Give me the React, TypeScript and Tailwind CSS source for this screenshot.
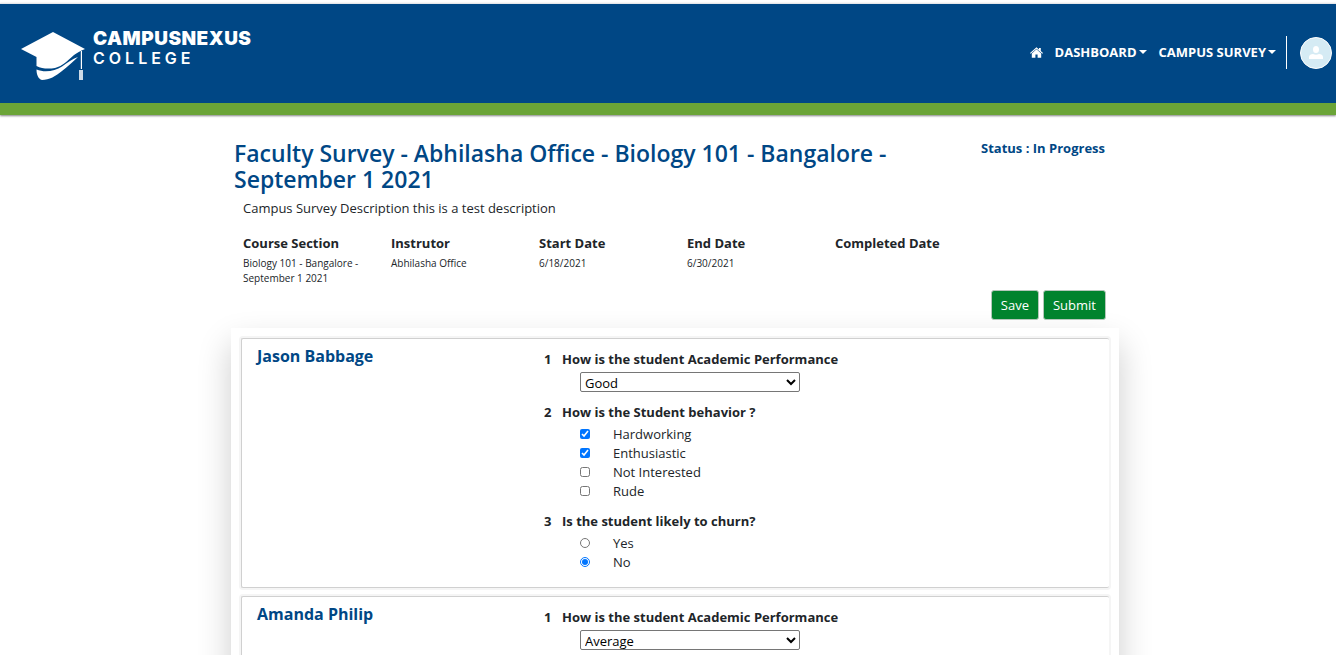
// App.tsx
import React, { useState } from 'react';

interface Question {
  text: string;
  type: 'select' | 'checkbox' | 'radio';
  options: string[];
}

interface Student {
  id: number;
  name: string;
  performance: string;
  behavior: string[];
  churn: string;
  questions: Question[];
}

const questions: Question[] = [
  { text: 'How is the student Academic Performance', type: 'select', options: ['Excellent', 'Good', 'Average', 'Poor'] },
  { text: 'How is the Student behavior ?', type: 'checkbox', options: ['Hardworking', 'Enthusiastic', 'Not Interested', 'Rude'] },
  { text: 'Is the student likely to churn?', type: 'radio', options: ['Yes', 'No'] },
];

const students: Student[] = [
  { id: 1, name: 'Jason Babbage', performance: 'Good', behavior: ['Hardworking', 'Enthusiastic'], churn: 'No', questions },
  { id: 2, name: 'Amanda Philip', performance: 'Average', behavior: [], churn: '', questions: questions.slice(0, 1) },
];

const details = [
  { label: 'Course Section', value: 'Biology 101 - Bangalore - September 1 2021' },
  { label: 'Instrutor', value: 'Abhilasha Office' },
  { label: 'Start Date', value: '6/18/2021' },
  { label: 'End Date', value: '6/30/2021' },
  { label: 'Completed Date', value: '' },
];

function Logo() {
  return (
    <a href="#" className="flex gap-1.5 text-white">
      <svg width="66" height="50" viewBox="0 0 66 50" fill="currentColor" aria-hidden="true">
        <path d="M32 1 L64 18 C59 20 56 22 53 24 C46 30 42 35 34 37 C28 38 21 38 15.5 35 V26 L0 18 Z" />
        <path d="M15.5 38.5 C24 42 34 40 41 35.5 C47 31.5 51 28 57 26 C52 31 47 35 41 40 C35 45 28 49 21 49 C17 48 15.5 43 15.5 38.5 Z" />
        <path d="M59.8 20 H61 V38 H59.8 Z" />
        <path d="M58 39 H62 V49 H58 Z" opacity="0.8" />
      </svg>
      <div className="flex flex-col font-['Inter',sans-serif]">
        <span className="text-[19px] leading-4 font-black tracking-wide">CAMPUSNEXUS</span>
        <span className="text-[16px] leading-[22px] font-semibold tracking-[4px]">COLLEGE</span>
      </div>
    </a>
  );
}

function Caret() {
  return (
    <svg width="8" height="4" viewBox="0 0 8 4" fill="currentColor" aria-hidden="true" className="mb-0.5">
      <path d="M0 0 H8 L4 4 Z" />
    </svg>
  );
}

function Header() {
  return (
    <header className="mt-[3px] border-t border-gray-200 shadow-[0_1px_2px_rgba(0,0,0,0.5)]">
      <div className="h-[99px] bg-[#004785] flex items-start justify-between pl-[21px] pr-1 pt-[27px]">
        <Logo />
        <nav className="flex items-center text-white text-[13px] font-bold pt-[5px]">
          <a href="#" aria-label="Home" className="mr-3">
            <svg width="13" height="11" viewBox="0 0 13 11" fill="currentColor" aria-hidden="true">
              <path d="M6.5 0.2 L9 2.4 V1 H10.8 V4 L13 6 L12.3 6.8 L6.5 1.7 L0.7 6.8 L0 6 Z" />
              <path d="M6.5 2.3 L11.2 6.4 V10.7 H7.6 V7.5 H5.4 V10.7 H1.8 V6.4 Z" />
            </svg>
          </a>
          <button type="button" className="flex items-center gap-0.5 mr-3">
            DASHBOARD <Caret />
          </button>
          <button type="button" className="flex items-center gap-0.5">
            CAMPUS SURVEY <Caret />
          </button>
          <span className="w-px h-[33px] bg-white ml-[10px] mr-[13px]" />
          <button type="button" aria-label="Profile" className="w-8 h-8 rounded-full bg-[#d5ebf4] border border-white flex items-center justify-center">
            <svg width="14" height="13" viewBox="0 0 14 13" fill="white" aria-hidden="true">
              <ellipse cx="7" cy="3.5" rx="3" ry="3.5" />
              <path d="M0 13 V11 C0 9 2 8 4 8 C6 9 8 9 10 8 C12 8 14 9 14 11 V13 Z" />
            </svg>
          </button>
        </nav>
      </div>
      <div className="h-3 bg-[#6ba437]" />
    </header>
  );
}

function StudentCard({ student }: { student: Student }) {
  const [performance, setPerformance] = useState(student.performance);
  const [behavior, setBehavior] = useState(student.behavior);
  const [churn, setChurn] = useState(student.churn);

  const toggleBehavior = (option: string) => {
    setBehavior(behavior.includes(option) ? behavior.filter((b) => b !== option) : [...behavior, option]);
  };

  return (
    <section className="flex border border-r-0 border-[#d0d0d0] rounded-xs shadow-[0_0_0_2px_#f5f5f5] pt-[10px] pb-[15px] pl-[15px]">
      <h2 className="w-[287px] shrink-0 text-base leading-[14px] font-bold text-[#004785]">{student.name}</h2>
      <ol className="flex-1 flex flex-col gap-[10px]">
        {student.questions.map((q, index) => (
          <li key={q.text} className="flex">
            <span className="w-[18px] shrink-0 leading-5 font-bold">{index + 1}</span>
            <fieldset className="flex-1">
              <legend className="leading-5 font-bold mb-[3px]">{q.text}</legend>
              {q.type === 'select' ? (
                <select
                  aria-label={q.text}
                  value={performance}
                  onChange={(e) => setPerformance(e.target.value)}
                  className="block ml-[18px] w-[220px] h-5 border border-[#767676] rounded-xs bg-white text-black"
                >
                  {q.options.map((o) => (
                    <option key={o}>{o}</option>
                  ))}
                </select>
              ) : (
                q.options.map((o) => (
                  <label key={o} className="flex items-start gap-[23px] ml-[18px] h-[19px] leading-[19px]">
                    <input
                      type={q.type}
                      name={`q${index + 1}-${student.id}`}
                      className="w-[10px] h-[10px] mt-1"
                      checked={q.type === 'checkbox' ? behavior.includes(o) : churn === o}
                      onChange={() => (q.type === 'checkbox' ? toggleBehavior(o) : setChurn(o))}
                    />
                    {o}
                  </label>
                ))
              )}
            </fieldset>
          </li>
        ))}
      </ol>
    </section>
  );
}

export default function App() {
  return (
    <div className="min-h-screen flow-root bg-white font-['Open_Sans',sans-serif] text-[13px] text-[#212529]">
      <Header />
      <main className="max-w-[902px] mx-auto pl-[14px] pt-[25px]">
        <div className="flex justify-between items-start pl-[3px] pr-[14px]">
          <h1 className="w-[700px] text-[23px] leading-[26px] font-semibold text-[#004785]">
            Faculty Survey - Abhilasha Office - Biology 101 - Bangalore - September 1 2021
          </h1>
          <p className="leading-[17px] font-bold text-[#004785]">Status : In Progress</p>
        </div>
        <p className="pl-3 mt-[6px] leading-5">Campus Survey Description this is a test description</p>

        <dl className="grid grid-cols-6 pl-3 mt-[15px] -mr-3">
          {details.map((d) => (
            <div key={d.label} className="pr-5">
              <dt className="leading-5 font-bold">{d.label}</dt>
              <dd className="mt-[3px] text-[10px] leading-[15px]">{d.value}</dd>
            </div>
          ))}
        </dl>

        <div className="flex justify-end gap-1 mt-1 pr-[13px] text-white">
          <button type="button" className="h-[30px] px-[9px] pt-px rounded-[3px] bg-[#00832d] border border-[#b5c7bb]">
            Save
          </button>
          <button type="button" className="h-[30px] px-[9px] pt-px rounded-[3px] bg-[#00832d] border border-[#b5c7bb]">
            Submit
          </button>
        </div>

        <div className="mt-2 p-[10px] flex flex-col gap-2 bg-white shadow-[0_16px_32px_rgba(0,0,0,0.2)]">
          {students.map((s) => (
            <StudentCard key={s.id} student={s} />
          ))}
        </div>
      </main>
    </div>
  );
}
